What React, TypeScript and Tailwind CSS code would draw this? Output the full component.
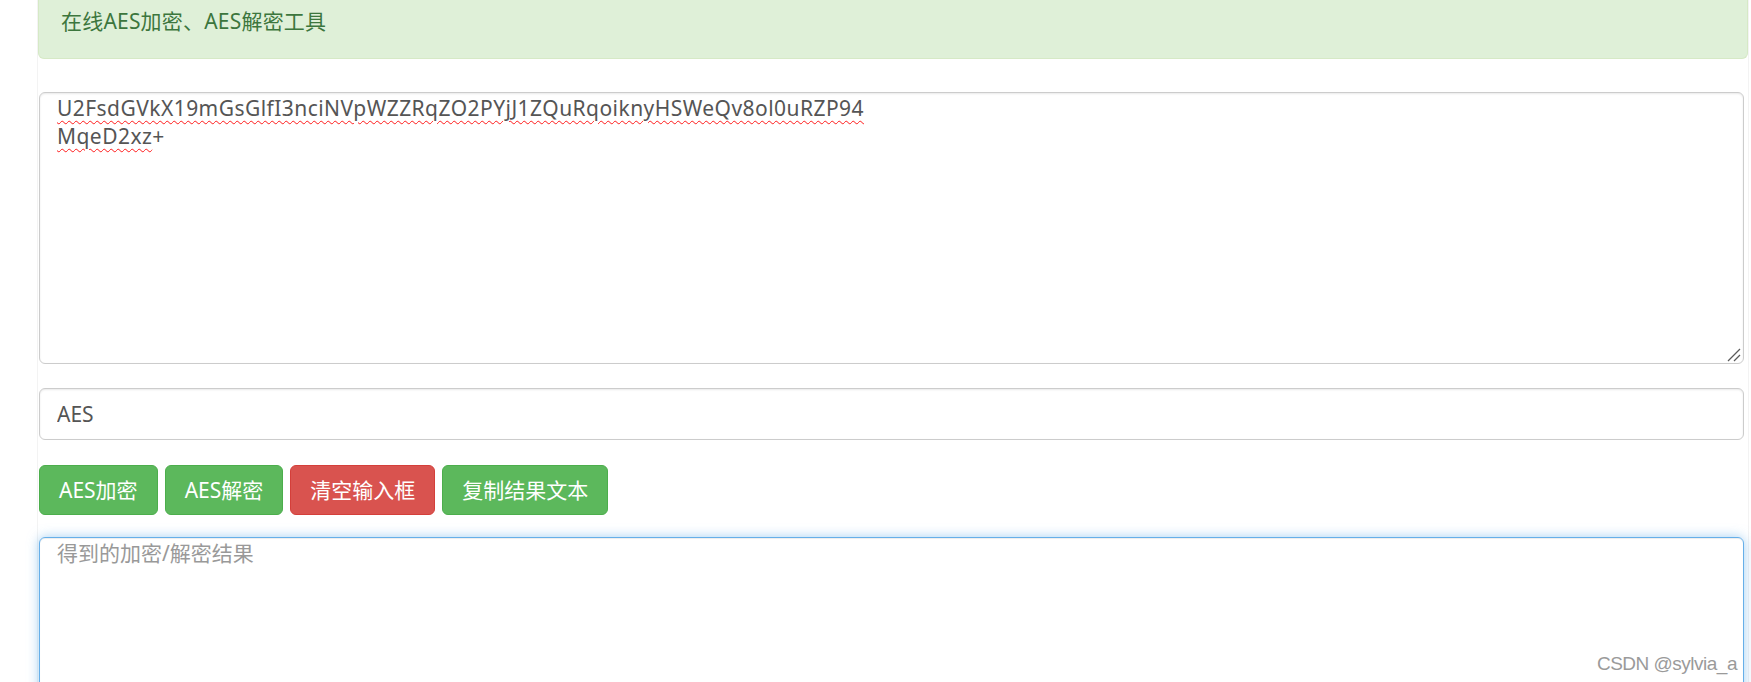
import React from 'react';

const fontStack = "font-['Noto_Sans','Noto_Sans_CJK_SC',sans-serif]";

const ResizeGrip: React.FC = () => (
  <svg className="absolute right-[2px] bottom-[1px]" width="14" height="14" viewBox="0 0 14 14">
    <line x1="1" y1="13" x2="13" y2="1" stroke="#5a5a5a" strokeWidth="1.3" />
    <line x1="7" y1="13" x2="13" y2="7" stroke="#5a5a5a" strokeWidth="1.3" />
  </svg>
);

const buttons = [
  { label: 'AES加密', danger: false },
  { label: 'AES解密', danger: false },
  { label: '清空输入框', danger: true },
  { label: '复制结果文本', danger: false },
];

const App: React.FC = () => {
  const wavy = 'underline decoration-wavy decoration-[#ff1a1a] decoration-1 underline-offset-[4px]';

  return (
    <div className={`relative h-[682px] overflow-hidden bg-white text-[21px] ${fontStack}`}>
      <div className="ml-[37px] w-[1712px] h-full border-x border-[#f3f3f3]">
        {/* alert banner, its top edge is cut off by the screenshot */}
        <div className="rounded-b-[6px] border border-t-0 border-[#d6e9c6] bg-[#dff0d8] pl-[22px] pt-[6px] pb-[22px] leading-[30px] tracking-[0.2px] text-[#3c763d]">
          在线AES加密、AES解密工具
        </div>

        <div className="ml-[1px] mr-[4px] flex flex-col">
          <div className="relative mt-[33px] h-[272px] rounded-[6px] border border-[#ccc] px-[17px] pt-[1px] leading-[28px] tracking-[0.45px] text-[#555] shadow-[inset_0_1px_2px_rgba(0,0,0,0.09)]">
            <div className="whitespace-pre">
              <span className={wavy}>U2FsdGVkX19mGsGlfI3nciNVpWZZRqZO2PYjJ1ZQuRqoiknyHSWeQv8ol0uRZP94</span>
              {'\n'}
              <span className={wavy}>MqeD2xz</span>+
            </div>
            <ResizeGrip />
          </div>

          <input
            className="mt-[24px] h-[52px] rounded-[6px] border border-[#ccc] px-[17px] text-[#555] outline-none shadow-[inset_0_1px_2px_rgba(0,0,0,0.09)]"
            defaultValue="AES"
            readOnly
          />

          <div className="mt-[25px] flex gap-[7px]">
            {buttons.map(b => (
              <button
                key={b.label}
                className={`h-[50px] rounded-[6px] border px-[19px] leading-[30px] text-white ${
                  b.danger ? 'border-[#d43f3a] bg-[#d9534f]' : 'border-[#4cae4c] bg-[#5cb85c]'
                }`}
              >
                {b.label}
              </button>
            ))}
          </div>

          <textarea
            className="mt-[22px] h-[300px] resize-none rounded-[6px] border border-[#66afe9] px-[17px] pt-[1px] leading-[28px] text-[#555] outline-none placeholder:text-[#999] shadow-[inset_0_1px_1px_rgba(0,0,0,0.075),0_0_12px_rgba(102,175,233,0.6)]"
            placeholder="得到的加密/解密结果"
          />
        </div>
      </div>

      <div className="absolute right-[14px] bottom-[9px] font-['Liberation_Sans',sans-serif] text-[19px] leading-none tracking-[-0.5px] text-[#9a9a9a]">
        CSDN @sylvia_a
      </div>
    </div>
  );
};

export default App;
